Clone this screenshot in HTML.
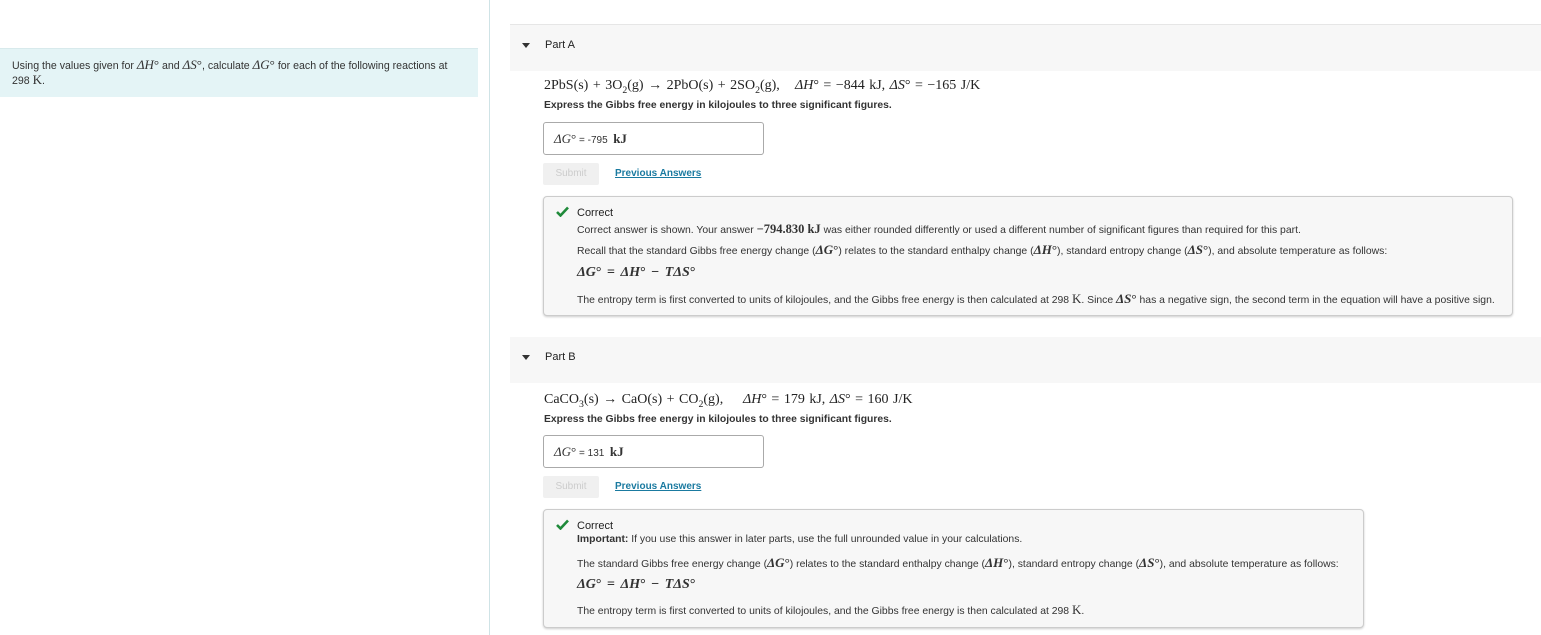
<!DOCTYPE html>
<html><head><meta charset="utf-8"><style>
body{margin:0;width:1541px;height:635px;background:#fff;font-family:"Liberation Sans",Arial,sans-serif;color:#333;position:relative;overflow:hidden}
.a{position:absolute;white-space:nowrap}
.m{font-family:"Liberation Serif",serif}
.s{font-size:10.35px}
.hdr{position:absolute;left:510px;width:1031px;height:46px;background:#f7f7f7;border-top:1px solid #e6e6e6}
.hdr .t{position:absolute;left:35px;top:14px;font-size:11px;color:#222}
.hdr .tri{position:absolute;left:12px;top:18px;width:0;height:0;border-left:4px solid transparent;border-right:4px solid transparent;border-top:5px solid #333}
.inp{position:absolute;left:543px;width:219px;height:31px;border:1px solid #aaa;border-radius:3px;font-size:10px}
.btn{position:absolute;left:543px;width:56px;height:22px;background:#f0f0f0;border-radius:2px;color:#ccc;font-size:10px;text-align:center;line-height:22px}
.lnk{position:absolute;left:615px;font-size:10px;color:#1a7aa0;text-decoration:underline;font-weight:bold}
.box{position:absolute;left:543px;border:1px solid #ccc;border-radius:4px;background:#f7f7f7;box-shadow:0 1px 2px rgba(0,0,0,.2)}
.box .a{font-size:10.4px;color:#333}
.ok{position:absolute;left:12px;top:9px}
.eq{font-size:14px;color:#222;word-spacing:1px}
sub{font-size:70%}
</style></head><body>
<div style="position:absolute;left:489px;top:0;width:1px;height:635px;background:#cfe3e6"></div>
<div style="position:absolute;left:0;top:48px;width:478px;height:48px;background:#e4f4f6;border-top:1px solid #d8eaec"></div>
<div class="a" style="left:12px;top:58px;line-height:13px;font-size:10.6px">Using the values given for <span class="m" style="font-size:13px"><i>ΔH</i>°</span> and <span class="m" style="font-size:13px"><i>ΔS</i>°</span>, calculate <span class="m" style="font-size:13px"><i>ΔG</i>°</span> for each of the following reactions at<br>298 <span class="m" style="font-size:13px">K</span>.</div>

<div class="hdr" style="top:24px"><div class="tri"></div><div class="t">Part A</div></div>
<div class="a m eq" style="left:544px;top:78px">2PbS(s) + 3O<sub>2</sub>(g) → 2PbO(s) + 2SO<sub>2</sub>(g),</div>
<div class="a m eq" style="left:795px;top:78px"><i>ΔH</i>° = −844 kJ, <i>ΔS</i>° = −165 J/K</div>
<div class="a s" style="left:544px;top:100px;font-weight:bold;color:#333">Express the Gibbs free energy in kilojoules to three significant figures.</div>
<div class="inp" style="top:122px"><span class="a" style="left:10px;top:8px"><span class="m" style="font-size:13px"><i>ΔG</i>°</span> = -795 &nbsp;<span class="m" style="font-size:13px;font-weight:bold">kJ</span></span></div>
<div class="btn" style="top:163px">Submit</div>
<div class="lnk" style="top:168px">Previous Answers</div>
<div class="box" style="top:196px;width:968px;height:118px">
<svg class="ok" width="13" height="11" viewBox="0 0 13 11"><path d="M1 6l3.5 3.5L12 1.5" stroke="#1f8a3a" stroke-width="2.6" fill="none"/></svg>
<div class="a" style="left:33px;top:10px;font-size:11px;color:#222">Correct</div>
<div class="a" style="left:33px;top:25px">Correct answer is shown. Your answer <span class="m" style="font-size:12.5px;font-weight:bold">−794.830 kJ</span> was either rounded differently or used a different number of significant figures than required for this part.</div>
<div class="a" style="left:33px;top:45px">Recall that the standard Gibbs free energy change (<span class="m" style="font-size:13px;font-weight:bold"><i>ΔG</i>°</span>) relates to the standard enthalpy change (<span class="m" style="font-size:13px;font-weight:bold"><i>ΔH</i>°</span>), standard entropy change (<span class="m" style="font-size:13px;font-weight:bold"><i>ΔS</i>°</span>), and absolute temperature as follows:</div>
<div class="a m" style="left:33px;top:68px;font-size:14px;font-weight:bold;word-spacing:2px"><i>ΔG</i>° = <i>ΔH</i>° − <i>TΔS</i>°</div>
<div class="a" style="left:33px;top:94px">The entropy term is first converted to units of kilojoules, and the Gibbs free energy is then calculated at 298 <span class="m" style="font-size:13px">K</span>. Since <span class="m" style="font-size:13px;font-weight:bold"><i>ΔS</i>°</span> has a negative sign, the second term in the equation will have a positive sign.</div>
</div>

<div class="hdr" style="top:337px;border-top:none"><div class="tri"></div><div class="t">Part B</div></div>
<div class="a m eq" style="left:544px;top:392px">CaCO<sub>3</sub>(s) → CaO(s) + CO<sub>2</sub>(g),</div>
<div class="a m eq" style="left:743px;top:392px"><i>ΔH</i>° = 179 kJ, <i>ΔS</i>° = 160 J/K</div>
<div class="a s" style="left:544px;top:414px;font-weight:bold;color:#333">Express the Gibbs free energy in kilojoules to three significant figures.</div>
<div class="inp" style="top:435px"><span class="a" style="left:10px;top:8px"><span class="m" style="font-size:13px"><i>ΔG</i>°</span> = 131 &nbsp;<span class="m" style="font-size:13px;font-weight:bold">kJ</span></span></div>
<div class="btn" style="top:476px">Submit</div>
<div class="lnk" style="top:481px">Previous Answers</div>
<div class="box" style="top:509px;width:819px;height:117px">
<svg class="ok" width="13" height="11" viewBox="0 0 13 11"><path d="M1 6l3.5 3.5L12 1.5" stroke="#1f8a3a" stroke-width="2.6" fill="none"/></svg>
<div class="a" style="left:33px;top:10px;font-size:11px;color:#222">Correct</div>
<div class="a" style="left:33px;top:24px"><b>Important:</b> If you use this answer in later parts, use the full unrounded value in your calculations.</div>
<div class="a" style="left:33px;top:45px">The standard Gibbs free energy change (<span class="m" style="font-size:13px;font-weight:bold"><i>ΔG</i>°</span>) relates to the standard enthalpy change (<span class="m" style="font-size:13px;font-weight:bold"><i>ΔH</i>°</span>), standard entropy change (<span class="m" style="font-size:13px;font-weight:bold"><i>ΔS</i>°</span>), and absolute temperature as follows:</div>
<div class="a m" style="left:33px;top:67px;font-size:14px;font-weight:bold;word-spacing:2px"><i>ΔG</i>° = <i>ΔH</i>° − <i>TΔS</i>°</div>
<div class="a" style="left:33px;top:92px">The entropy term is first converted to units of kilojoules, and the Gibbs free energy is then calculated at 298 <span class="m" style="font-size:13px">K</span>.</div>
</div>
</body></html>
